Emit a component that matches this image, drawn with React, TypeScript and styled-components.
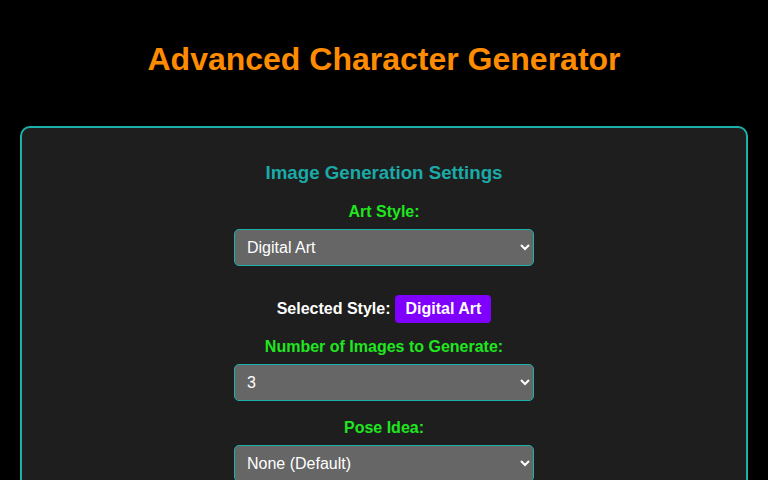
import styled, { createGlobalStyle } from "styled-components";

const GlobalStyle = createGlobalStyle`
  html, body {
    margin: 0;
    background: #000;
  }
  body {
    padding: 20px;
    font-family: "Liberation Sans", Arial, sans-serif;
    color: #fff;
  }
`;

const artStyles = ["Digital Art", "Anime", "Photorealistic", "Oil Painting", "Watercolor"];
const imageCounts = ["1", "2", "3", "4"];
const poses = ["None (Default)", "Standing", "Sitting", "Action"];

function App() {
  const selectedStyle = "Digital Art";

  return (
    <>
      <GlobalStyle />
      <Title>Advanced Character Generator</Title>
      <Panel>
        <PanelTitle>Image Generation Settings</PanelTitle>

        <Field>
          <Label htmlFor="art-style">Art Style:</Label>
          <Select id="art-style" defaultValue={selectedStyle}>
            {artStyles.map((s) => (
              <option key={s}>{s}</option>
            ))}
          </Select>
        </Field>

        <SelectedRow>
          Selected Style: <Badge>{selectedStyle}</Badge>
        </SelectedRow>

        <Field>
          <Label htmlFor="image-count">Number of Images to Generate:</Label>
          <Select id="image-count" defaultValue="3">
            {imageCounts.map((n) => (
              <option key={n}>{n}</option>
            ))}
          </Select>
        </Field>

        <Field>
          <Label htmlFor="pose">Pose Idea:</Label>
          <Select id="pose" defaultValue="None (Default)">
            {poses.map((p) => (
              <option key={p}>{p}</option>
            ))}
          </Select>
        </Field>
      </Panel>
    </>
  );
}
export default App;

const Title = styled.h1`
  margin: 21px 0 0;
  height: 37px;
  font-size: 32px;
  font-weight: bold;
  text-align: center;
  color: #ff8c00;
`;

const Panel = styled.section`
  margin-top: 48px;
  border: 2px solid #1cb0ab;
  border-radius: 10px;
  background: #1e1e1e;
  padding: 34px 20px 40px;
  display: flex;
  flex-direction: column;
  align-items: center;
`;

const PanelTitle = styled.h2`
  margin: 0 0 18px;
  font-size: 18.72px;
  line-height: 22px;
  font-weight: bold;
  color: #1aaaa8;
`;

const Field = styled.div`
  display: flex;
  flex-direction: column;
  align-items: center;
  gap: 8px;
  margin-bottom: 17px;
`;

const Label = styled.label`
  font-size: 16px;
  line-height: 18px;
  padding-top: 1px;
  font-weight: bold;
  color: #1fe61f;
`;

const Select = styled.select`
  width: 300px;
  height: 37px;
  padding: 0 8px;
  border: 1px solid #1cb0ab;
  border-radius: 5px;
  background: #666;
  color: #fff;
  font-family: "Liberation Sans", Arial, sans-serif;
  font-size: 16px;
`;

const SelectedRow = styled.div`
  display: flex;
  align-items: center;
  gap: 5px;
  margin: 12px 0 14px;
  font-size: 16px;
  font-weight: bold;
  color: #fff;
`;

const Badge = styled.span`
  display: inline-flex;
  align-items: center;
  height: 28px;
  padding: 0 10px;
  border-radius: 4px;
  background: #8000ff;
  color: #fff;
`;
